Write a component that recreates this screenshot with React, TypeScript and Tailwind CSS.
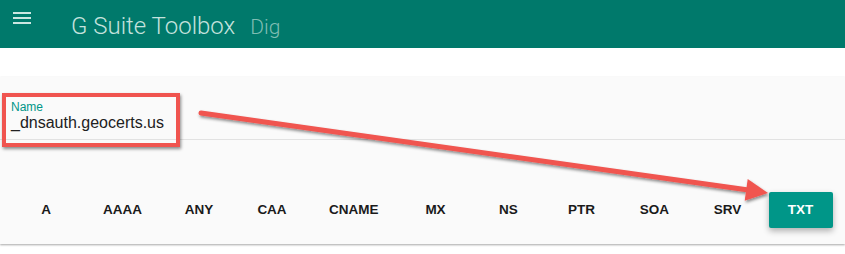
import React from "react";

const RECORD_TYPES = ["A", "AAAA", "ANY", "CAA", "CNAME", "MX", "NS", "PTR", "SOA", "SRV", "TXT"];

function MenuIcon() {
  return (
    <svg width="18" height="12" viewBox="0 0 18 12" className="block">
      <rect x="0" y="0" width="18" height="2" fill="#cbe6e1" />
      <rect x="0" y="5" width="18" height="2" fill="#cbe6e1" />
      <rect x="0" y="10" width="18" height="2" fill="#cbe6e1" />
    </svg>
  );
}

function AnnotationArrow() {
  return (
    <svg
      width="845"
      height="254"
      viewBox="0 0 845 254"
      className="pointer-events-none absolute left-0 top-0"
    >
      <defs>
        <filter id="arrowShadow" x="-10%" y="-50%" width="120%" height="200%">
          <feDropShadow dx="1" dy="2" stdDeviation="1.5" floodColor="#000" floodOpacity="0.45" />
        </filter>
      </defs>
      <g filter="url(#arrowShadow)">
        <line
          x1="201"
          y1="113"
          x2="752"
          y2="190.5"
          stroke="#f0544f"
          strokeWidth="5"
          strokeLinecap="round"
        />
        <polygon points="768,193 747.7,179 744.7,200.8" fill="#f0544f" />
      </g>
    </svg>
  );
}

export default function App() {
  return (
    <div
      className="relative h-[254px] w-[845px] overflow-hidden bg-white"
      style={{ fontFamily: '"Liberation Sans", Arial, sans-serif' }}
    >
      <header className="flex h-12 items-start bg-[#00796b]">
        <div className="ml-[13px] mt-[12px]">
          <MenuIcon />
        </div>
        <div
          className="ml-[40px] mt-[12px] whitespace-nowrap text-[24px] font-light leading-[28px] text-[#c4e2dd]"
          style={{ fontFamily: 'Roboto, "Liberation Sans", sans-serif' }}
        >
          G Suite Toolbox
          <span className="ml-[15px] text-[21px] text-[#7fbdb3]">Dig</span>
        </div>
      </header>

      <div className="mt-[29px] bg-[#fafafa] pt-[25px] pb-[16px] shadow-[0_1px_2px_rgba(0,0,0,0.35)]">
        <div className="px-[11px]">
          <div className="h-[11px] text-[12px] leading-[11px] text-[#009688]">Name</div>
          <div className="text-[16px] leading-5 text-[#212121]">_dnsauth.geocerts.us</div>
        </div>
        <div className="mt-[6px] h-px bg-[#e2e2e2]" />

        <div className="mt-[52px] flex gap-[9px] pl-[14px]">
          {RECORD_TYPES.map((type) => {
            const active = type === "TXT";
            return (
              <button
                key={type}
                type="button"
                className={
                  active
                    ? "h-9 min-w-16 rounded-[2px] bg-[#009688] px-4 text-[13.5px] font-bold text-white shadow-[0_3px_6px_rgba(0,0,0,0.3)]"
                    : "h-9 min-w-16 rounded-[2px] px-4 text-[13.5px] font-bold text-[#1a1a1a]"
                }
              >
                {type}
              </button>
            );
          })}
        </div>
      </div>

      <div className="pointer-events-none absolute left-[2px] top-[93px] h-[54px] w-[178px] border-4 border-[#f0544f] shadow-[1px_2px_3px_rgba(0,0,0,0.45)]" />
      <AnnotationArrow />
    </div>
  );
}
